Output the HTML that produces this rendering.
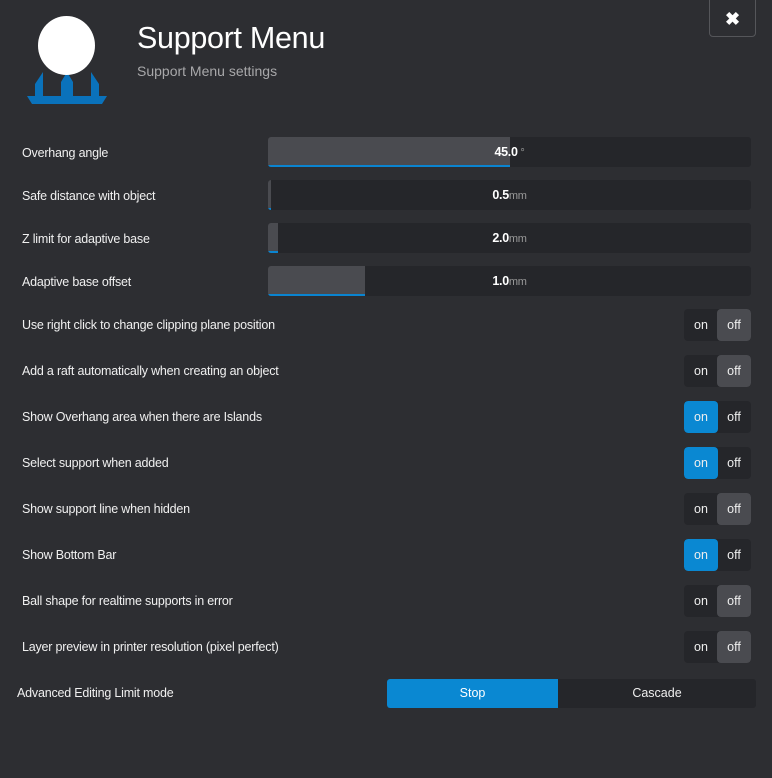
<!DOCTYPE html>
<html><head><style>
body{margin:0;width:772px;height:778px;background:#2d2e32;font-family:"Liberation Sans",sans-serif;color:#eee;position:relative;overflow:hidden}
.abs{position:absolute}
.lbl{position:absolute;left:22px;font-size:12.5px;color:#f0f0f0;letter-spacing:-0.2px}
.sl{position:absolute;left:268px;width:483px;height:30px;background:#25262a;border-radius:3px;overflow:hidden}
.sl .f{position:absolute;left:0;top:0;bottom:0;background:#4a4b50;border-bottom:2px solid #0a84d0;box-sizing:border-box}
.sl .v{position:absolute;left:0;right:0;top:8px;text-align:center;font-size:12.5px;color:#fff;font-weight:bold;letter-spacing:-0.3px}
.sl .v span{font-weight:normal;color:#999;font-size:11px}
.tg{position:absolute;left:684px;width:67px;height:32px;background:#25262a;border-radius:4px;font-size:12.5px;overflow:hidden}
.tg div{position:absolute;top:0;height:32px;line-height:32px;width:34px;text-align:center;color:#eee;border-radius:4px}
.tg .a{left:0}.tg .b{left:33px}
.off .b{background:#4a4b50}
.on .a{background:#0a88d2}
</style></head><body>
<svg class="abs" style="left:0;top:0" width="120" height="110">
<polygon points="35,84 43,72 43,96 35,96" fill="#0a72bb"/>
<polygon points="99,84 91,72 91,96 99,96" fill="#0a72bb"/>
<polygon points="61,82 67,72 73,82 73,96 61,96" fill="#0a72bb"/>
<polygon points="27,96 107,96 102,104 32,104" fill="#0a72bb"/>
<ellipse cx="66.5" cy="45.5" rx="28.5" ry="29.5" fill="#fff"/>
</svg>
<div class="abs" style="left:137px;top:21px;font-size:30.5px;color:#fff;letter-spacing:-0.3px">Support Menu</div>
<div class="abs" style="left:137px;top:63px;font-size:14px;color:#a8a8aa">Support Menu settings</div>
<div class="abs" style="left:709px;top:-4px;width:45px;height:39px;border:1px solid #55565a;border-radius:4px;text-align:center;line-height:44px;font-size:18px;font-weight:bold;color:#fff">✖</div>

<div class="lbl" style="top:146px">Overhang angle</div>
<div class="sl" style="top:137px"><div class="f" style="width:242px"></div><div class="v">45.0<span> °</span></div></div>
<div class="lbl" style="top:189px">Safe distance with object</div>
<div class="sl" style="top:180px"><div class="f" style="width:3px"></div><div class="v">0.5<span>mm</span></div></div>
<div class="lbl" style="top:232px">Z limit for adaptive base</div>
<div class="sl" style="top:223px"><div class="f" style="width:10px"></div><div class="v">2.0<span>mm</span></div></div>
<div class="lbl" style="top:275px">Adaptive base offset</div>
<div class="sl" style="top:266px"><div class="f" style="width:97px"></div><div class="v">1.0<span>mm</span></div></div>

<div class="lbl" style="top:318px">Use right click to change clipping plane position</div>
<div class="tg off" style="top:309px"><div class="a">on</div><div class="b">off</div></div>
<div class="lbl" style="top:364px">Add a raft automatically when creating an object</div>
<div class="tg off" style="top:355px"><div class="a">on</div><div class="b">off</div></div>
<div class="lbl" style="top:410px">Show Overhang area when there are Islands</div>
<div class="tg on" style="top:401px"><div class="a">on</div><div class="b">off</div></div>
<div class="lbl" style="top:456px">Select support when added</div>
<div class="tg on" style="top:447px"><div class="a">on</div><div class="b">off</div></div>
<div class="lbl" style="top:502px">Show support line when hidden</div>
<div class="tg off" style="top:493px"><div class="a">on</div><div class="b">off</div></div>
<div class="lbl" style="top:548px">Show Bottom Bar</div>
<div class="tg on" style="top:539px"><div class="a">on</div><div class="b">off</div></div>
<div class="lbl" style="top:594px">Ball shape for realtime supports in error</div>
<div class="tg off" style="top:585px"><div class="a">on</div><div class="b">off</div></div>
<div class="lbl" style="top:640px">Layer preview in printer resolution (pixel perfect)</div>
<div class="tg off" style="top:631px"><div class="a">on</div><div class="b">off</div></div>

<div class="lbl" style="left:17px;top:686px">Advanced Editing Limit mode</div>
<div class="abs" style="left:387px;top:679px;width:369px;height:29px;background:#25262a;border-radius:3px;overflow:hidden;font-size:12.5px">
<div class="abs" style="left:0;top:0;width:171px;height:29px;background:#0a88d2;text-align:center;line-height:29px;color:#fff">Stop</div>
<div class="abs" style="left:171px;top:0;width:198px;height:29px;text-align:center;line-height:29px;color:#eee">Cascade</div>
</div>
</body></html>
